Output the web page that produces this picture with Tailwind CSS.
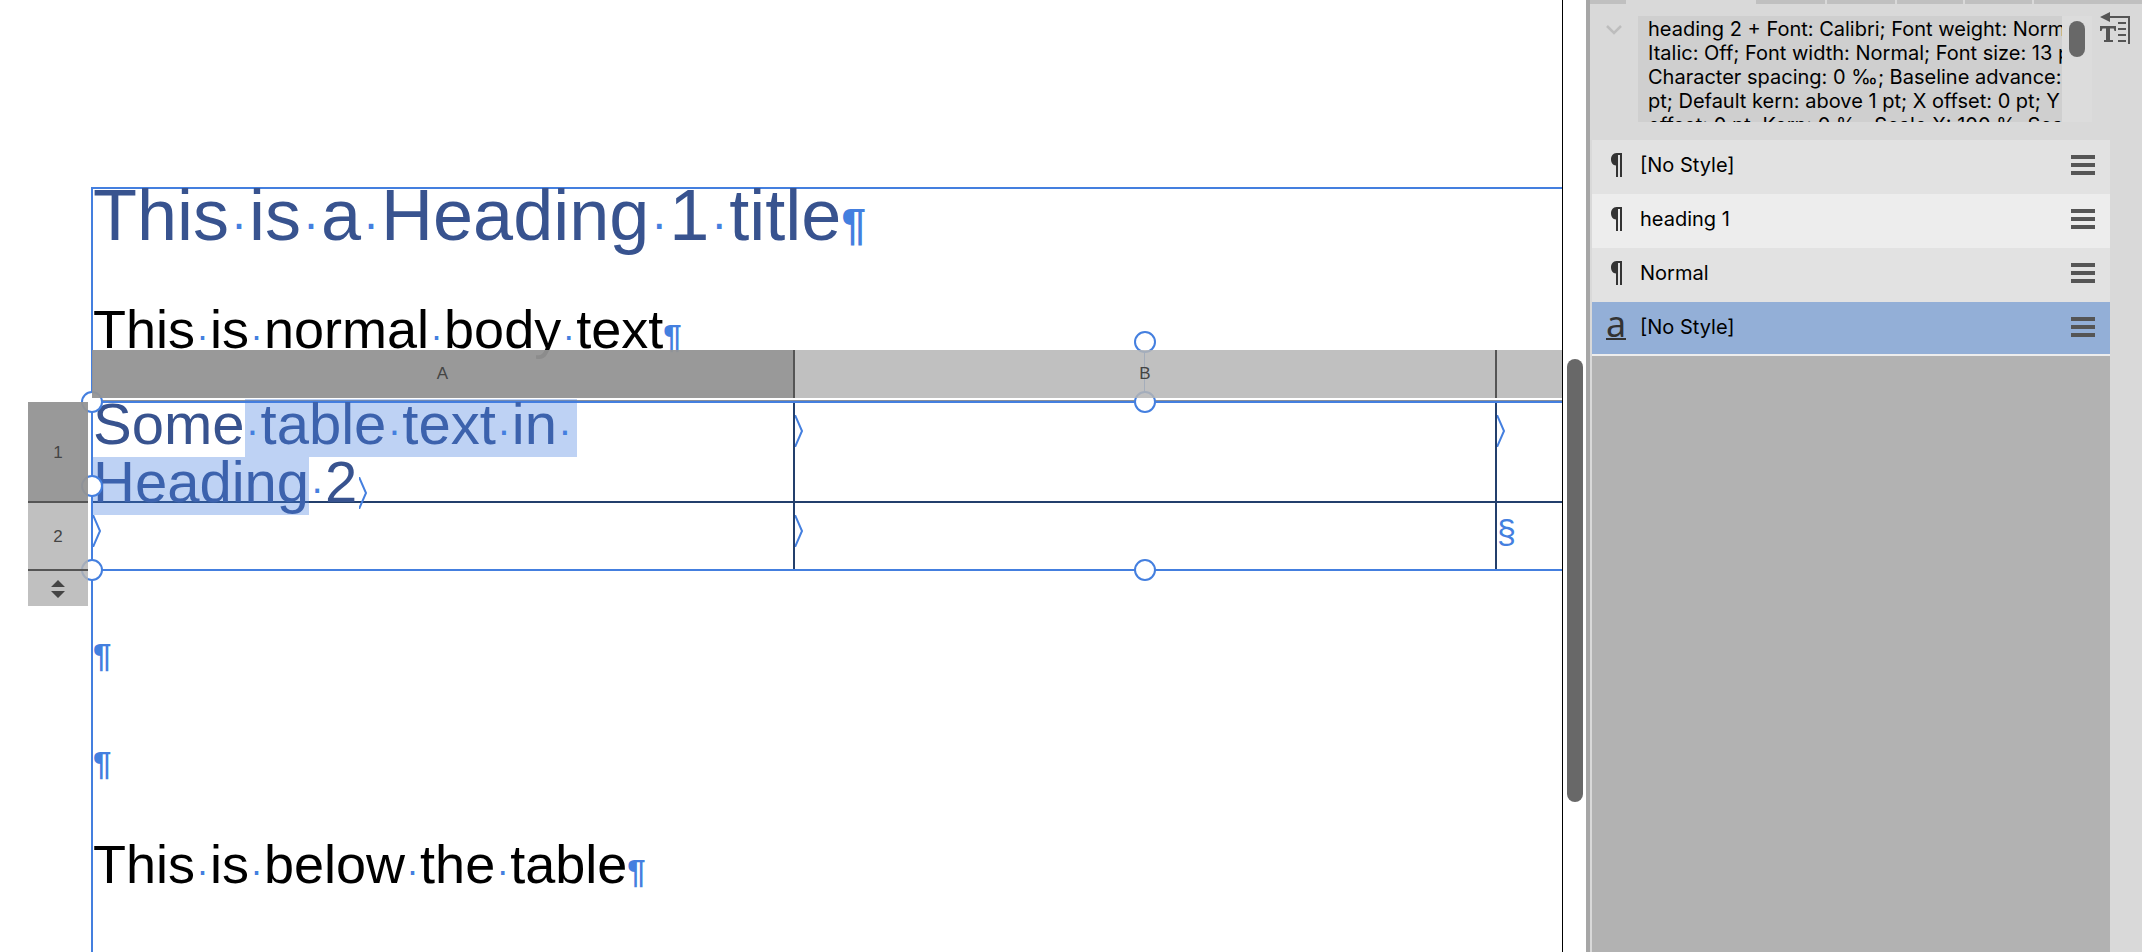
<!DOCTYPE html>
<html lang="en">
<head>
  <meta charset="UTF-8" />
  <meta name="viewport" content="width=device-width, initial-scale=1.0">
  <title>Text Styles</title>
  <script src="https://cdn.jsdelivr.net/npm/@tailwindcss/browser@4"></script>
</head>
<body class="flex h-screen overflow-hidden bg-white font-['Liberation_Sans',sans-serif] text-black antialiased">

<svg class="hidden">
  <symbol id="cell-end" viewBox="0 0 9 32"><path d="M0 0l7 16-7 16" fill="none" stroke="#447fdf" stroke-width="2" /></symbol>
  <symbol id="pilcrow" viewBox="0 0 11 24"><path d="M11 0v24H9V2H7v22H5V12.500C2 12.500 0 9.500 0 6.500 0 3 2 0 5.500 0z" fill="#333" /></symbol>
  <symbol id="menu" viewBox="0 0 24 20"><path d="M0 0h24v4H0zM0 8h24v4H0zM0 16h24v4H0z" fill="#555" /></symbol>
</svg>

<!-- Document -->
<main class="min-w-0 flex-1 overflow-hidden border-r border-black pl-[91px] pt-[187px]">
  <div class="h-full border-l-2 border-t-2 border-[#447fdf]">
    <h1 class="h-[52px] whitespace-nowrap text-[72px] leading-[52px] text-[#38538f]">This<span class="inline-block w-5 text-center text-[48px] leading-none text-[#447fdf]">·</span>is<span class="inline-block w-5 text-center text-[48px] leading-none text-[#447fdf]">·</span>a<span class="inline-block w-5 text-center text-[48px] leading-none text-[#447fdf]">·</span>Heading<span class="inline-block w-5 text-center text-[48px] leading-none text-[#447fdf]">·</span>1<span class="inline-block w-5 text-center text-[48px] leading-none text-[#447fdf]">·</span>title<span class="text-[44px] font-bold leading-none text-[#447fdf]">¶</span></h1>

    <p class="mt-[34px] h-[108px] whitespace-nowrap text-[54px] leading-[108px]">This<span class="inline-block w-[15px] text-center text-[36px] leading-none text-[#447fdf]">·</span>is<span class="inline-block w-[15px] text-center text-[36px] leading-none text-[#447fdf]">·</span>normal<span class="inline-block w-[15px] text-center text-[36px] leading-none text-[#447fdf]">·</span>body<span class="inline-block w-[15px] text-center text-[36px] leading-none text-[#447fdf]">·</span>text<span class="text-[33px] font-bold leading-none text-[#447fdf]">¶</span></p>

    <!-- Table with its selection frame -->
    <div class="relative mt-[18px]">
      <table class="w-full table-fixed border-separate border-spacing-0 border-y-2 border-[#447fdf] text-left shadow-[0_-1px_0_#8a8f99]">
        <colgroup>
          <col class="w-[702px]">
          <col class="w-[702px]">
          <col>
        </colgroup>
        <tbody>
          <tr>
            <td class="border-b-2 border-r-2 border-[#233f6c] p-0 align-top">
              <div class="flex h-[98px] flex-col whitespace-nowrap text-[58px] leading-[50px] text-[#38538f]">
                <div class="-mt-1 flex h-[58px] shrink-0"><span>Some</span><span class="bg-[#447fdf]/35 pr-1 text-[#3c62ad]"><span class="inline-block w-4 text-center text-[40px] leading-none text-[#447fdf]">·</span>table<span class="inline-block w-4 text-center text-[40px] leading-none text-[#447fdf]">·</span>text<span class="inline-block w-4 text-center text-[40px] leading-none text-[#447fdf]">·</span>in<span class="inline-block w-4 text-center text-[40px] leading-none text-[#447fdf]">·</span></span></div>
                <div class="flex h-[58px] shrink-0"><span class="bg-[#447fdf]/35 text-[#3c62ad]">Heading</span><span><span class="inline-block w-4 text-center text-[40px] leading-none text-[#447fdf]">·</span>2</span><svg class="ml-0.5 mt-5 h-8 w-[9px]"><use href="#cell-end" /></svg></div>
              </div>
            </td>
            <td class="border-b-2 border-r-2 border-[#233f6c] p-0 pt-3 align-top"><svg class="h-8 w-[9px]"><use href="#cell-end" /></svg></td>
            <td class="border-b-2 border-[#233f6c] p-0 pt-3 align-top"><svg class="h-8 w-[9px]"><use href="#cell-end" /></svg></td>
          </tr>
          <tr>
            <td class="h-[66px] border-r-2 border-[#233f6c] p-0 pt-3 align-top"><svg class="h-8 w-[9px]"><use href="#cell-end" /></svg></td>
            <td class="border-r-2 border-[#233f6c] p-0 pt-3 align-top"><svg class="h-8 w-[9px]"><use href="#cell-end" /></svg></td>
            <td class="p-0 pt-3 align-top text-[34px] leading-8 text-[#447fdf]">§</td>
          </tr>
        </tbody>
      </table>

      <!-- Resize handles -->
      <div class="absolute -top-[59px] left-[1051px] h-[60px] w-px bg-[#447fdf]"></div>
      <div class="absolute -left-3 -top-2.5 size-[22px] rounded-full border-2 border-[#447fdf] bg-white"></div>
      <div class="absolute -left-3 top-[74px] size-[22px] rounded-full border-2 border-[#447fdf] bg-white"></div>
      <div class="absolute -bottom-2.5 -left-3 size-[22px] rounded-full border-2 border-[#447fdf] bg-white"></div>
      <div class="absolute -top-[70px] left-[1041px] size-[22px] rounded-full border-2 border-[#447fdf] bg-white"></div>
      <div class="absolute -top-2.5 left-[1041px] size-[22px] rounded-full border-2 border-[#447fdf] bg-white"></div>
      <div class="absolute -bottom-2.5 left-[1041px] size-[22px] rounded-full border-2 border-[#447fdf] bg-white"></div>

      <!-- Column headers -->
      <div class="absolute -top-[51px] -left-px right-0 grid h-12 grid-cols-[703px_702px_1fr] text-center text-[17px] leading-[48px] text-[#444]">
        <div class="border-r-2 border-[#555] bg-[#949494]/95">A</div>
        <div class="border-r-2 border-[#555] bg-[#b5b5b5]/85">B</div>
        <div class="bg-[#b5b5b5]/85"></div>
      </div>

      <!-- Row headers -->
      <div class="absolute -left-[65px] top-px w-[60px] text-center text-[17px] text-[#444]">
        <div class="h-[101px] border-b-2 border-[#555] bg-[#949494]/95 leading-[102px]">1</div>
        <div class="h-[68px] border-b-2 border-[#555] bg-[#b5b5b5]/85 leading-[68px]">2</div>
        <button aria-label="Add rows" class="flex h-[35px] w-full items-center justify-center bg-[#b5b5b5]/85">
          <svg class="h-[18px] w-[14px]" viewBox="0 0 14 18" fill="#444"><path d="M7 0l7 7H0zM0 11h14l-7 7z" /></svg>
        </button>
      </div>
    </div>

    <div class="mt-[23px] whitespace-nowrap text-[54px] leading-[108px]">
      <p class="h-[108px]"><span class="text-[33px] font-bold leading-none text-[#447fdf]">¶</span></p>
      <p class="h-[108px]"><span class="text-[33px] font-bold leading-none text-[#447fdf]">¶</span></p>
      <p class="h-[108px]">This<span class="inline-block w-[15px] text-center text-[36px] leading-none text-[#447fdf]">·</span>is<span class="inline-block w-[15px] text-center text-[36px] leading-none text-[#447fdf]">·</span>below<span class="inline-block w-[15px] text-center text-[36px] leading-none text-[#447fdf]">·</span>the<span class="inline-block w-[15px] text-center text-[36px] leading-none text-[#447fdf]">·</span>table<span class="text-[33px] font-bold leading-none text-[#447fdf]">¶</span></p>
    </div>
  </div>
</main>

<!-- Document scrollbar -->
<div class="flex w-[23px] flex-col items-center">
  <div class="flex-[359]"></div>
  <div class="w-4 flex-[443] rounded-full bg-[#686868]"></div>
  <div class="flex-[150]"></div>
</div>

<!-- Text styles panel -->
<aside class="flex w-[556px] shrink-0 flex-col border-l-4 border-[#a6a6a6] bg-[#d9d9d9] font-['Inter',sans-serif] text-[20px] leading-6">
  <div class="flex h-1 shrink-0 gap-0.5">
    <div class="w-9 bg-[#c0c0c0]"></div>
    <div class="w-[126px]"></div>
    <div class="w-[69px] bg-[#c0c0c0]"></div>
    <div class="w-[68px] bg-[#c0c0c0]"></div>
    <div class="w-[66px] bg-[#c0c0c0]"></div>
    <div class="w-[67px] bg-[#c0c0c0]"></div>
    <div class="flex-1 bg-[#c0c0c0]"></div>
  </div>

  <div class="flex h-[136px] shrink-0 items-start pr-3 pt-3">
    <button aria-label="Expand" class="flex w-12 justify-center pt-[9px]">
      <svg class="h-[10px] w-4" viewBox="0 0 16 10" fill="none" stroke="#bdbdbd" stroke-width="2.500"><path d="M1 1l7 7 7-7" /></svg>
    </button>
    <div class="h-[106px] min-w-0 flex-1 overflow-hidden whitespace-nowrap bg-[#cfcfcf] pl-[10px] pt-px">
      heading 2 + Font: Calibri; Font weight: Normal;<br>
      Italic: Off; Font width: Normal; Font size: 13 pt;<br>
      Character spacing: 0 ‰; Baseline advance: 0<br>
      pt; Default kern: above 1 pt; X offset: 0 pt; Y<br>
      offset: 0 pt; Kern: 0 ‰; Scale X: 100 %; Scale
    </div>
    <div class="flex h-[106px] w-[30px] justify-center bg-[#dcdcdc] pt-[5px]">
      <div class="h-9 w-4 rounded-full bg-[#686868]"></div>
    </div>
    <button aria-label="Apply text style" class="-mt-1 ml-2 h-8 w-[30px]">
      <svg class="h-8 w-[30px]" viewBox="0 0 30 32" fill="#555"><path d="M0 5l10-5v4h20v28h-2V6H10v4zM0 14h16v5h-1.500l-.8-2.500H10V28h3v2H4v-2h2V16.500H2.500L1.500 19H0zM18 10h8v2h-8zM18 16h8v2h-8zM18 22h8v2h-8zM18 28h8v2h-8z" /></svg>
    </button>
  </div>

  <div class="ml-0.5 mr-8 flex flex-1 flex-col bg-[#b2b2b2]">
    <div class="flex h-[54px] items-center bg-[#e2e2e2] pb-1 pl-[19px] pr-[15px]">
      <svg class="h-6 w-[11px]"><use href="#pilcrow" /></svg>
      <span class="ml-[18px] flex-1">[No Style]</span>
      <button aria-label="No Style menu"><svg class="h-5 w-6"><use href="#menu" /></svg></button>
    </div>
    <div class="flex h-[54px] items-center bg-[#ededed] pb-1 pl-[19px] pr-[15px]">
      <svg class="h-6 w-[11px]"><use href="#pilcrow" /></svg>
      <span class="ml-[18px] flex-1">heading 1</span>
      <button aria-label="heading 1 menu"><svg class="h-5 w-6"><use href="#menu" /></svg></button>
    </div>
    <div class="flex h-[54px] items-center bg-[#e2e2e2] pb-1 pl-[19px] pr-[15px]">
      <svg class="h-6 w-[11px]"><use href="#pilcrow" /></svg>
      <span class="ml-[18px] flex-1">Normal</span>
      <button aria-label="Normal menu"><svg class="h-5 w-6"><use href="#menu" /></svg></button>
    </div>
    <div class="flex h-[54px] items-center border-b-2 border-[#ededed] bg-[#93afd7] pb-0.5 pl-[14px] pr-[15px]">
      <span class="h-[26px] w-5 border-b-2 border-[#333] text-center font-['Noto_Sans',sans-serif] text-[36px] leading-[20px] text-[#333]">a</span>
      <span class="ml-[14px] flex-1">[No Style]</span>
      <button aria-label="Character style menu"><svg class="h-5 w-6"><use href="#menu" /></svg></button>
    </div>
  </div>
</aside>

</body>
</html>
